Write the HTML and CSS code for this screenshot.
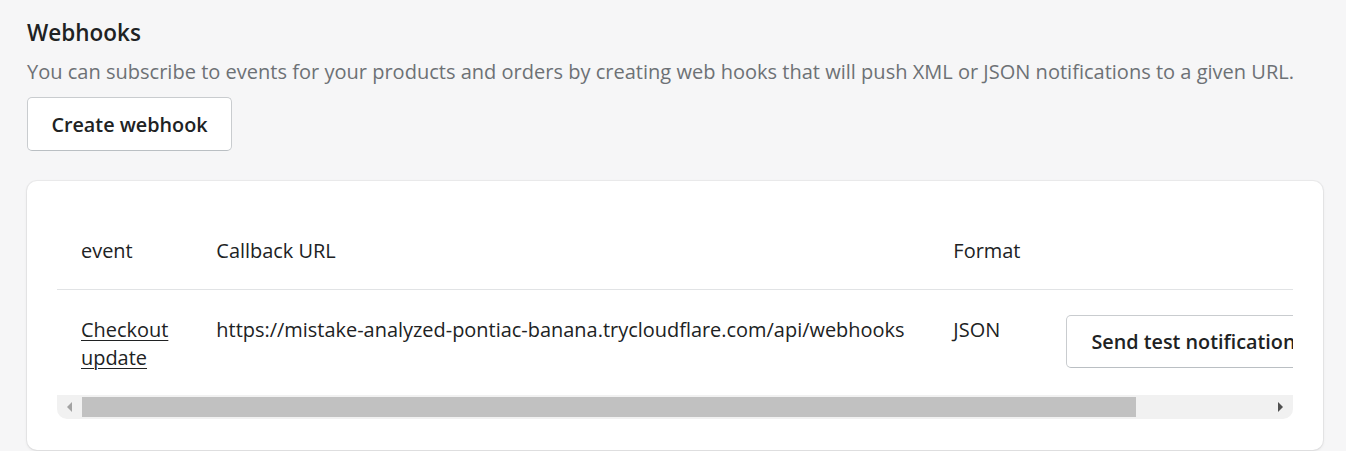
FILE: index.html
```html
<!DOCTYPE html>
<html lang="en">
<head>
<meta charset="utf-8">
<title>Webhooks</title>
<link rel="stylesheet" href="styles.css">
</head>
<body>
<section class="page">
  <h2 class="title">Webhooks</h2>
  <p class="desc">You can subscribe to events for your products and orders by creating web hooks that will push XML or JSON notifications to a given URL.</p>
  <button class="btn btn-create" type="button">Create webhook</button>
  <div class="card">
    <div class="scroller">
      <div class="viewport">
        <table class="table">
          <thead>
            <tr>
              <th class="c-event">event</th>
              <th class="c-url">Callback URL</th>
              <th class="c-format">Format</th>
              <th class="c-action"></th>
            </tr>
          </thead>
          <tbody>
            <tr>
              <td class="c-event"><a href="#" class="link">Checkout update</a></td>
              <td class="c-url">https://mistake-analyzed-pontiac-banana.trycloudflare.com/api/webhooks</td>
              <td class="c-format">JSON</td>
              <td class="c-action"><button class="btn btn-test" type="button">Send test notification</button></td>
            </tr>
          </tbody>
        </table>
      </div>
      <div class="scrollbar">
        <span class="arrow arrow-left"></span>
        <span class="track"><span class="thumb"></span></span>
        <span class="arrow arrow-right"></span>
      </div>
    </div>
  </div>
</section>
</body>
</html>
```
FILE: styles.css
```css
* { box-sizing: border-box; }
html, body { margin: 0; padding: 0; }
body {
  background: #f6f6f7;
  font-family: "Open Sans", "Noto Sans", sans-serif;
  color: #202223;
  height: 451px;
  overflow: hidden;
}
.page {
  padding: 17px 23px 0 27px;
}
.title {
  margin: 0;
  font-size: 22.5px;
  font-weight: 600;
  line-height: 32px;
}
.desc {
  margin: 9px 0 0;
  font-size: 20.05px;
  line-height: 28px;
  color: #6d7175;
  white-space: nowrap;
}
.btn {
  font-family: inherit;
  background: #fff;
  color: #202223;
  border: 1px solid #c9cccf;
  border-bottom-color: #babfc3;
  border-radius: 5px;
  font-size: 19.8px;
  font-weight: 600;
  cursor: pointer;
  white-space: nowrap;
}
.btn-create {
  display: block;
  margin-top: 11px;
  height: 54px;
  width: 205px;
  padding: 0;
}
.card {
  margin-top: 30px;
  background: #fff;
  border-radius: 10px;
  box-shadow: 0 0 0 1px rgba(63,63,68,0.05), 0 1px 3px rgba(63,63,68,0.12);
  padding: 30px 30px 31px;
}
.scroller {
  border-radius: 0 0 10px 10px;
  overflow: hidden;
}
.viewport {
  overflow: hidden;
}
.table {
  border-collapse: collapse;
  width: 1390px;
  font-size: 19.95px;
  line-height: 28px;
}
.table th {
  font-weight: 400;
  text-align: left;
  padding: 26px 24px 24px;
  border-bottom: 1px solid #e1e3e5;
}
.table td {
  vertical-align: top;
  padding: 26px 24px 23px;
}
.c-event { width: 135px; }
.c-url { width: 737px; white-space: nowrap; }
.c-format { width: 114px; }
.table td.c-action { padding: 25px 24px 27px 22px; }
.link {
  color: #202223;
  text-decoration: underline;
  text-underline-offset: 3px;
  text-decoration-thickness: 1px;
}
.btn-test {
  height: 53px;
  padding: 0 24px;
  text-align: left;
}
.scrollbar {
  display: flex;
  height: 24px;
  background: #f1f1f1;
}
.arrow {
  width: 25px;
  flex: none;
  display: flex;
  align-items: center;
  justify-content: center;
}
.arrow-left::before {
  content: "";
  border-style: solid;
  border-width: 5px 5px 5px 0;
  border-color: transparent #a3a3a3 transparent transparent;
}
.arrow-right::before {
  content: "";
  border-style: solid;
  border-width: 5px 0 5px 5px;
  border-color: transparent transparent transparent #505050;
}
.track {
  flex: 1;
  padding: 2px 0;
  display: flex;
}
.thumb {
  width: 1054px;
  background: #c1c1c1;
}
```
